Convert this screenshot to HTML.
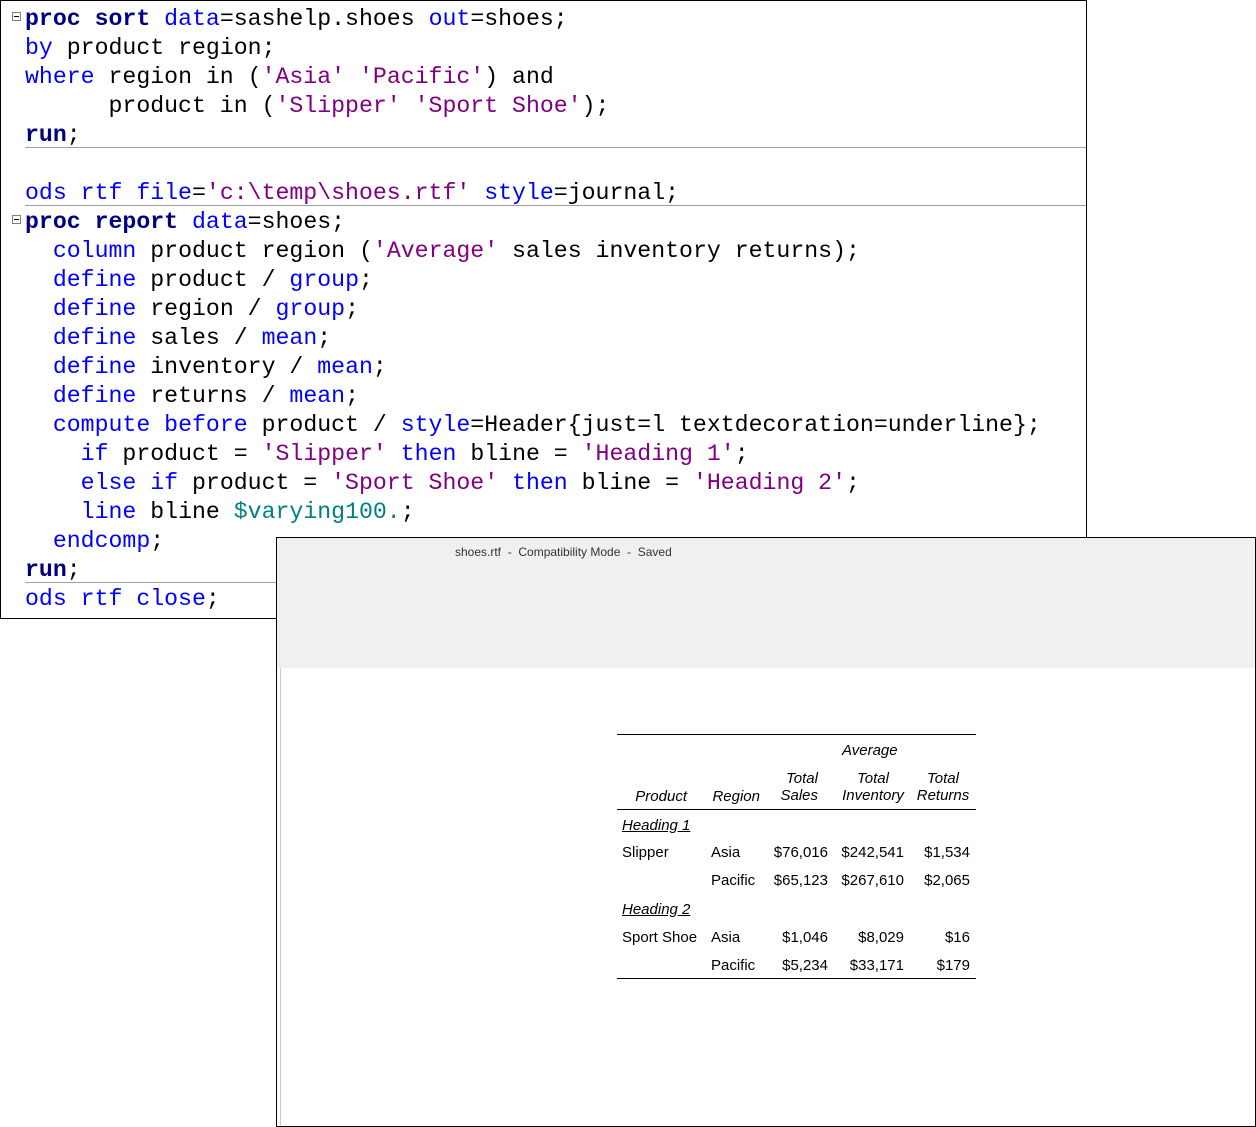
<!DOCTYPE html>
<html><head><meta charset="utf-8"><style>
body{margin:0;width:1256px;height:1127px;background:#fff;position:relative;overflow:hidden}
#code{position:absolute;left:0;top:0;width:1085px;height:617px;border:1px solid #000;background:#fff}
.l{position:absolute;left:24px;font-family:"Liberation Mono",monospace;font-size:23.2px;line-height:29px;white-space:pre;color:#000;margin-top:2px}
.k{color:#000080;font-weight:bold}.b{color:#0000ff}.s{color:#800080}.t{color:#008080}
.sep{position:absolute;left:24px;right:0;height:1px;background:#a0a0a0}
.fold{position:absolute;left:11px;width:7px;height:7px;border:1px solid #808080;font-size:0}
.fold:after{content:"";position:absolute;left:1px;top:3px;width:5px;height:1px;background:#000}
#doc{position:absolute;left:276px;top:537px;width:978px;height:588px;border:1px solid #000;background:#fff}
#bar{position:absolute;left:0;top:0;right:0;height:130px;background:#f0f0f0}
#title{position:absolute;left:178px;top:7px;font:12px "Liberation Sans",sans-serif;color:#333}
.c{position:absolute;font:15px "Liberation Sans",sans-serif;color:#000;white-space:nowrap}
.i{font-style:italic}.r{text-align:right}
.hl{position:absolute;left:617px;width:359px;height:1px;background:#000}
</style></head><body>
<div id="code">
<div class="fold" style="top:11px"></div>
<div class="fold" style="top:214px"></div>
<div class="l" style="top:2px"><span class="k">proc sort</span> <span class="b">data</span>=sashelp.shoes <span class="b">out</span>=shoes;</div>
<div class="l" style="top:31px"><span class="b">by</span> product region;</div>
<div class="l" style="top:60px"><span class="b">where</span> region in (<span class="s">'Asia'</span> <span class="s">'Pacific'</span>) and</div>
<div class="l" style="top:89px">      product in (<span class="s">'Slipper'</span> <span class="s">'Sport Shoe'</span>);</div>
<div class="l" style="top:118px"><span class="k">run</span>;</div>
<div class="sep" style="top:146px"></div>
<div class="l" style="top:176px"><span class="b">ods rtf file</span>=<span class="s">'c:\temp\shoes.rtf'</span> <span class="b">style</span>=journal;</div>
<div class="sep" style="top:204px"></div>
<div class="l" style="top:205px"><span class="k">proc report</span> <span class="b">data</span>=shoes;</div>
<div class="l" style="top:234px">  <span class="b">column</span> product region (<span class="s">'Average'</span> sales inventory returns);</div>
<div class="l" style="top:263px">  <span class="b">define</span> product / <span class="b">group</span>;</div>
<div class="l" style="top:292px">  <span class="b">define</span> region / <span class="b">group</span>;</div>
<div class="l" style="top:321px">  <span class="b">define</span> sales / <span class="b">mean</span>;</div>
<div class="l" style="top:350px">  <span class="b">define</span> inventory / <span class="b">mean</span>;</div>
<div class="l" style="top:379px">  <span class="b">define</span> returns / <span class="b">mean</span>;</div>
<div class="l" style="top:408px">  <span class="b">compute before</span> product / <span class="b">style</span>=Header{just=l textdecoration=underline};</div>
<div class="l" style="top:437px">    <span class="b">if</span> product = <span class="s">'Slipper'</span> <span class="b">then</span> bline = <span class="s">'Heading 1'</span>;</div>
<div class="l" style="top:466px">    <span class="b">else if</span> product = <span class="s">'Sport Shoe'</span> <span class="b">then</span> bline = <span class="s">'Heading 2'</span>;</div>
<div class="l" style="top:495px">    <span class="b">line</span> bline <span class="t">$varying100.</span>;</div>
<div class="l" style="top:524px">  <span class="b">endcomp</span>;</div>
<div class="l" style="top:553px"><span class="k">run</span>;</div>
<div class="sep" style="top:581px"></div>
<div class="l" style="top:582px"><span class="b">ods rtf close</span>;</div>
</div>
<div id="doc"><div id="bar"><div id="title">shoes.rtf&nbsp; - &nbsp;Compatibility Mode&nbsp; - &nbsp;Saved</div></div>
<div style="position:absolute;left:3px;top:130px;width:1px;height:458px;background:#ccc"></div></div>
<div class="hl" style="top:734px"></div>
<div class="hl" style="top:809px"></div>
<div class="hl" style="top:978px"></div>
<div class="c i" style="left:842px;top:742px">Average</div>
<div class="c i r" style="left:760px;width:58px;top:770px">Total<br>Sales</div>
<div class="c i" style="left:836px;width:74px;top:770px;text-align:center">Total<br>Inventory</div>
<div class="c i" style="left:912px;width:62px;top:770px;text-align:center">Total<br>Returns</div>
<div class="c i r" style="left:620px;width:67px;top:788px">Product</div>
<div class="c i r" style="left:700px;width:60px;top:788px">Region</div>
<div class="c i" style="left:622px;top:817px;text-decoration:underline">Heading 1</div>
<div class="c" style="left:622px;top:844px">Slipper</div>
<div class="c" style="left:711px;top:844px">Asia</div>
<div class="c r" style="left:760px;width:68px;top:844px">$76,016</div>
<div class="c r" style="left:830px;width:74px;top:844px">$242,541</div>
<div class="c r" style="left:910px;width:60px;top:844px">$1,534</div>
<div class="c" style="left:711px;top:872px">Pacific</div>
<div class="c r" style="left:760px;width:68px;top:872px">$65,123</div>
<div class="c r" style="left:830px;width:74px;top:872px">$267,610</div>
<div class="c r" style="left:910px;width:60px;top:872px">$2,065</div>
<div class="c i" style="left:622px;top:901px;text-decoration:underline">Heading 2</div>
<div class="c" style="left:622px;top:929px">Sport Shoe</div>
<div class="c" style="left:711px;top:929px">Asia</div>
<div class="c r" style="left:760px;width:68px;top:929px">$1,046</div>
<div class="c r" style="left:830px;width:74px;top:929px">$8,029</div>
<div class="c r" style="left:910px;width:60px;top:929px">$16</div>
<div class="c" style="left:711px;top:957px">Pacific</div>
<div class="c r" style="left:760px;width:68px;top:957px">$5,234</div>
<div class="c r" style="left:830px;width:74px;top:957px">$33,171</div>
<div class="c r" style="left:910px;width:60px;top:957px">$179</div>
</body></html>
